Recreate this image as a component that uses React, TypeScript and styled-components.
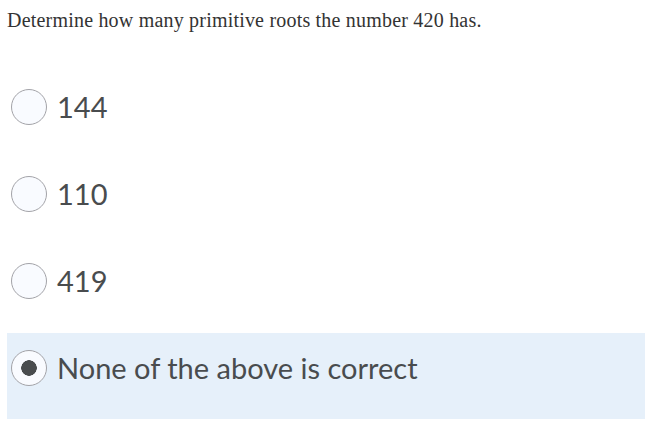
import React, { useState } from 'react'
import styled, { createGlobalStyle } from 'styled-components'

const GlobalStyle = createGlobalStyle`
  body {
    margin: 0;
    background: #ffffff;
  }
`

const options = ['144', '110', '419', 'None of the above is correct']

const Page = styled.div`
  padding-left: 7px;
  width: 638px;
`

const Question = styled.div`
  font-family: 'Liberation Serif', 'Times New Roman', serif;
  font-size: 20px;
  letter-spacing: 0.2px;
  color: #333;
  height: 72px;
  padding-top: 9px;
  box-sizing: border-box;
`

const List = styled.div`
  display: flex;
  flex-direction: column;
  gap: 1px;
`

const Row = styled.label<{ selected: boolean }>`
  display: flex;
  align-items: center;
  gap: 11px;
  height: 86px;
  padding: 16px 0 32px 4px;
  box-sizing: border-box;
  background: ${(p) => (p.selected ? '#e6f0fa' : 'transparent')};
  cursor: pointer;
`

const Radio = styled.span<{ checked: boolean }>`
  width: 36px;
  height: 38px;
  display: flex;
  align-items: center;
  justify-content: center;
  flex-shrink: 0;

  &::before {
    content: '';
    width: 34px;
    height: 34px;
    border-radius: 50%;
    border: 1px solid #a3a3a8;
    box-sizing: content-box;
    background: ${(p) =>
      p.checked
        ? 'radial-gradient(circle, #494c4e 0 7.5px, #f9fbff 8px)'
        : '#f9fbff'};
  }
`

const Label = styled.span`
  font-family: Lato, 'Open Sans', sans-serif;
  font-size: 29px;
  color: #494c4e;
  line-height: 38px;
  margin-left: -1px;
`

export default function App() {
  const [picked, setPicked] = useState(3)

  return (
    <Page>
      <GlobalStyle />
      <Question>Determine how many primitive roots the number 420 has.</Question>
      <List>
        {options.map((text, i) => (
          <Row key={text} selected={picked === i} onClick={() => setPicked(i)}>
            <Radio checked={picked === i} />
            <Label>{text}</Label>
          </Row>
        ))}
      </List>
    </Page>
  )
}
